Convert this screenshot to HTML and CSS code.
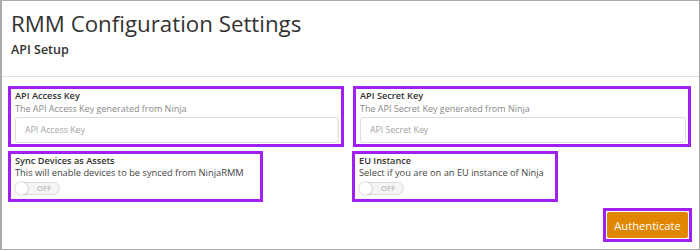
FILE: index.html
```html
<!DOCTYPE html>
<html>
<head>
<meta charset="utf-8">
<link rel="stylesheet" href="styles.css">
</head>
<body>
<div class="frame">
  <header class="head">
    <h1 class="title">RMM Configuration Settings</h1>
    <h2 class="subtitle">API Setup</h2>
  </header>
  <main class="content">
    <div class="row">
      <div class="field hl wide">
        <div class="label">API Access Key</div>
        <div class="desc">The API Access Key generated from Ninja</div>
        <input class="input" type="text" placeholder="API Access Key">
      </div>
      <div class="field hl wide right">
        <div class="label">API Secret Key</div>
        <div class="desc">The API Secret Key generated from Ninja</div>
        <input class="input" type="text" placeholder="API Secret Key">
      </div>
    </div>
    <div class="row row2">
      <div class="field hl tog sync">
        <div class="label">Sync Devices as Assets</div>
        <div class="desc dark">This will enable devices to be synced from NinjaRMM</div>
        <div class="switch"><span class="knob"></span><span class="off">OFF</span></div>
      </div>
      <div class="field hl tog eu">
        <div class="label">EU Instance</div>
        <div class="desc dark">Select if you are on an EU instance of Ninja</div>
        <div class="switch"><span class="knob"></span><span class="off">OFF</span></div>
      </div>
    </div>
    <div class="actions">
      <div class="hl btnwrap"><button class="btn">Authenticate</button></div>
    </div>
  </main>
</div>
</body>
</html>
```
FILE: styles.css
```css
* { box-sizing: border-box; }
html, body { margin: 0; padding: 0; background: #fff; }
body { font-family: "Open Sans", "Liberation Sans", sans-serif; color: #333; }
.frame {
  width: 700px;
  height: 250px;
  border: 1px solid #ababab;
  border-left-width: 2px;
  overflow: hidden;
}
.head {
  height: 76px;
  border-bottom: 1px solid #e2e2e2;
  padding: 8px 0 0 9px;
}
.title {
  margin: 0;
  font-size: 22.3px;
  font-weight: 400;
  line-height: 30px;
  color: #333;
}
.subtitle {
  margin: 3px 0 0;
  font-size: 12.5px;
  font-weight: 600;
  line-height: 16px;
  color: #333;
}
.content { padding: 9px 7px 0 6px; }
.row { display: flex; gap: 9px; }
.row2 { margin-top: 4px; gap: 89px; }
.hl { border: 3px solid #a21ff2; }
.field { padding: 1px 2px 1px 4px; }
.wide { width: 336px; }
.wide.right { width: 338px; }
.label {
  font-size: 9.2px;
  font-weight: 600;
  line-height: 12px;
  color: #333;
  white-space: nowrap;
}
.desc {
  font-size: 9px;
  line-height: 13px;
  color: #8a8a8a;
  white-space: nowrap;
}
.desc.dark { color: #444; font-size: 9.3px; line-height: 12px; }
.input {
  display: block;
  width: 100%;
  height: 26px;
  margin-top: 2px;
  border: 1px solid #dcdcdc;
  border-radius: 3px;
  padding: 0 9px;
  font-family: inherit;
  font-size: 8.8px;
  color: #333;
  background: #fff;
  outline: none;
}
.input::placeholder { color: #a5a5a5; }
.sync { width: 255px; }
.eu { width: 206px; }
.tog { padding-bottom: 4px; }
.switch {
  position: relative;
  width: 45px;
  height: 13px;
  margin-top: 3px;
  border: 1px solid #ddd;
  border-radius: 7px;
  background: #f4f4f4;
}
.knob {
  position: absolute;
  left: -1px;
  top: -1px;
  width: 13px;
  height: 13px;
  border-radius: 50%;
  background: #fff;
  box-shadow: 0 0 2px rgba(0,0,0,0.35);
}
.off {
  position: absolute;
  left: 21px;
  top: 0;
  font-size: 7.5px;
  line-height: 11px;
  color: #aaa;
  letter-spacing: 0.3px;
}
.actions {
  display: flex;
  justify-content: flex-end;
  margin-top: 6px;
}
.btnwrap { padding: 1px; }
.btn {
  display: block;
  width: 81px;
  height: 26px;
  border: none;
  border-radius: 2px;
  background: #e08600;
  color: #fff;
  font-family: inherit;
  font-size: 11.2px;
  padding: 0;
}
```
